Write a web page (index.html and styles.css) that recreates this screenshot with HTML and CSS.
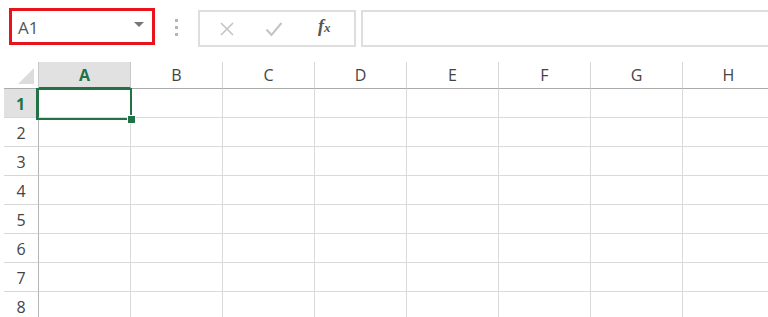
FILE: index.html
```html
<!DOCTYPE html>
<html>
<head>
    <title>Sheet1</title>
    <link rel="stylesheet" href="styles.css">
</head>
<body>
    <div class="formula-bar">
        <div class="name-box">
            <span class="name-value">A1</span>
            <span class="name-arrow"></span>
        </div>
        <div class="grip">
            <span></span><span></span><span></span>
        </div>
        <div class="fx-buttons">
            <svg class="fx-icon" width="16" height="16" viewBox="0 0 16 16">
                <path d="M2 2 L14 14 M14 2 L2 14" stroke="#c4c4c4" stroke-width="1.6" fill="none"/>
            </svg>
            <svg class="fx-icon" width="18" height="16" viewBox="0 0 18 16">
                <path d="M1.5 8.5 L6.5 14 L16.5 2" stroke="#c4c4c4" stroke-width="2" fill="none"/>
            </svg>
            <span class="fx-label"><i>f</i><i class="fx-x">x</i></span>
        </div>
        <div class="formula-input"></div>
    </div>

    <div class="sheet">
        <div class="grid" id="grid">
            <div class="corner">
                <svg width="16" height="16" viewBox="0 0 16 16"><path d="M16 0 L16 16 L0 16 Z" fill="#dcdcdc"/></svg>
            </div>
        </div>
        <div class="selection"><span class="handle"></span></div>
    </div>

    <script>
        const grid = document.getElementById('grid');
        const cols = ['A', 'B', 'C', 'D', 'E', 'F', 'G', 'H'];

        // column headers
        cols.forEach((c, i) => {
            const h = document.createElement('div');
            h.className = 'col-head' + (i === 0 ? ' active' : '');
            h.textContent = c;
            grid.appendChild(h);
        });

        // rows
        for (let r = 1; r <= 8; r++) {
            const rh = document.createElement('div');
            rh.className = 'row-head' + (r === 1 ? ' active' : '');
            rh.textContent = r;
            grid.appendChild(rh);
            cols.forEach(() => {
                const cell = document.createElement('div');
                cell.className = 'cell';
                grid.appendChild(cell);
            });
        }
    </script>
</body>
</html>
```

FILE: styles.css
```css
body {
    margin: 0;
    padding: 0;
    background-color: #ffffff;
    font-family: "Open Sans", "Noto Sans", sans-serif;
    overflow: hidden;
    width: 768px;
    height: 317px;
}
.formula-bar {
    display: flex;
    align-items: flex-start;
    height: 62px;
    padding-top: 8px;
    padding-left: 9px;
    box-sizing: border-box;
}
.name-box {
    width: 146px;
    height: 37px;
    border: 3px solid #e8141c;
    box-sizing: border-box;
    display: flex;
    align-items: center;
    justify-content: space-between;
    padding: 0 8px 0 6px;
}
.name-value {
    font-size: 17px;
    color: #555555;
    padding-top: 2px;
}
.name-arrow {
    width: 0;
    height: 0;
    border-left: 5px solid transparent;
    border-right: 5px solid transparent;
    border-top: 5px solid #777777;
    margin-top: -4px;
}
.grip {
    width: 43px;
    height: 38px;
    display: flex;
    flex-direction: column;
    align-items: center;
    justify-content: center;
    gap: 4px;
}
.grip span {
    width: 3px;
    height: 3px;
    background-color: #b5b5b5;
}
.fx-buttons {
    width: 158px;
    height: 37px;
    margin-top: 2px;
    border: 2px solid #dedede;
    box-sizing: border-box;
    display: flex;
    align-items: center;
    padding-left: 19px;
}
.fx-icon {
    margin-right: 30px;
}
.fx-icon + .fx-icon {
    margin-right: 35px;
}
.fx-label {
    font-family: "Liberation Serif", serif;
    font-size: 18px;
    color: #555555;
    font-weight: bold;
    margin-top: -4px;
}
.fx-x {
    font-size: 13px;
}
.formula-input {
    flex: 1;
    height: 37px;
    margin-top: 2px;
    margin-left: 5px;
    border: 2px solid #dedede;
    border-right: none;
    box-sizing: border-box;
}
.sheet {
    position: relative;
    padding-left: 4px;
}
.grid {
    display: grid;
    grid-template-columns: 35px repeat(8, 92px);
    grid-template-rows: 27px repeat(8, 29px);
}
.corner {
    border-right: 1px solid #c8c8c8;
    border-bottom: 1px solid #ababab;
    box-sizing: border-box;
    display: flex;
    align-items: flex-end;
    justify-content: flex-end;
    padding: 0 4px 4px 0;
}
.col-head {
    border-right: 1px solid #d6d6d6;
    border-bottom: 1px solid #ababab;
    box-sizing: border-box;
    text-align: center;
    font-size: 16px;
    line-height: 26px;
    color: #444444;
}
.col-head.active {
    background-color: #e1e1e1;
    color: #217346;
    font-weight: bold;
    border-bottom: 2px solid #217346;
    border-right-color: #c8c8c8;
}
.row-head {
    border-right: 1px solid #b4b4b4;
    border-bottom: 1px solid #d6d6d6;
    box-sizing: border-box;
    text-align: center;
    font-size: 16px;
    line-height: 30px;
    color: #444444;
}
.row-head.active {
    background-color: #e1e1e1;
    color: #217346;
    font-weight: bold;
    border-right: 2px solid #217346;
}
.cell {
    border-right: 1px solid #dadada;
    border-bottom: 1px solid #dadada;
    box-sizing: border-box;
}
.selection {
    position: absolute;
    left: 36px;
    top: 26px;
    width: 96px;
    height: 32px;
    border: 2px solid #217346;
    box-sizing: border-box;
}
.handle {
    position: absolute;
    right: -6px;
    bottom: -6px;
    width: 7px;
    height: 7px;
    background-color: #217346;
    border: 1px solid #ffffff;
}
```
